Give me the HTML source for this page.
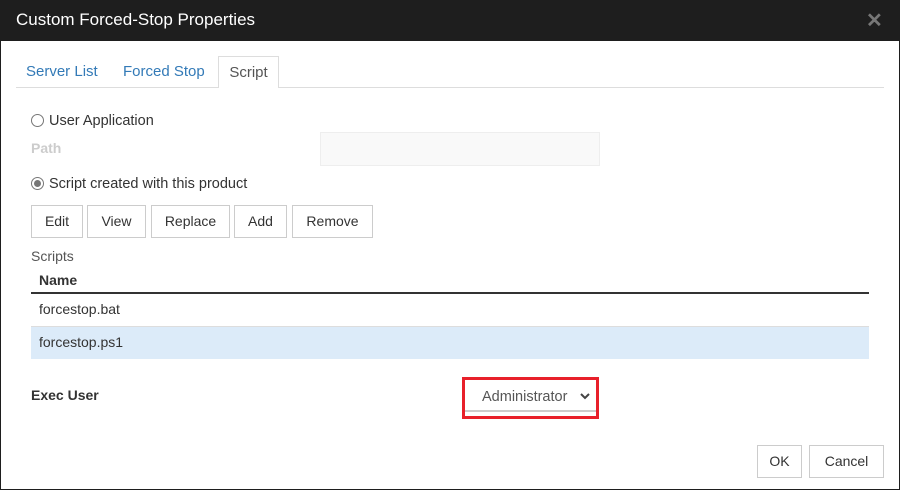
<!DOCTYPE html>
<html><head><style>
*{box-sizing:border-box;margin:0;padding:0}
body{width:900px;height:490px;background:#fff;font-family:"Liberation Sans",sans-serif;font-size:14px;color:#333;position:relative;overflow:hidden}
.a{position:absolute}
.hd{left:0;top:0;width:900px;height:41px;background:#1e1e1e;color:#fff;font-size:17px;padding:10px 16px}
.frame{left:0;top:0;width:900px;height:490px;border:1px solid #1e1e1e}
.btn{position:absolute;border:1px solid #ccc;background:#fff;height:33px;text-align:center;line-height:31px;font-size:14px;color:#333}
.rad{width:13px;height:13px;border:1px solid #777;border-radius:50%;background:#fff}
</style></head><body>
<div class="a frame"></div>
<div class="a hd">Custom Forced-Stop Properties</div>
<div class="a" style="left:866px;top:8px;color:#777;font-size:20px;font-weight:bold">✕</div>
<div class="a" style="left:16px;top:87px;width:868px;height:1px;background:#ddd"></div>
<div class="a" style="left:26px;top:63px;color:#337ab7;font-size:15px">Server List</div>
<div class="a" style="left:123px;top:63px;color:#337ab7;font-size:15px">Forced Stop</div>
<div class="a" style="left:218px;top:56px;width:61px;height:32px;border:1px solid #ddd;border-bottom:none;background:#fff;padding-top:7px;text-align:center;color:#555;font-size:15px">Script</div>
<div class="a rad" style="left:31px;top:114px"></div>
<div class="a" style="left:49px;top:113px;font-size:14.5px">User Application</div>
<div class="a" style="left:31px;top:140px;color:#ccc;font-weight:bold">Path</div>
<div class="a" style="left:320px;top:132px;width:280px;height:34px;background:#f9f9f9;border:1px solid #eee"></div>
<div class="a rad" style="left:31px;top:177px"></div>
<div class="a" style="left:34px;top:180px;width:7px;height:7px;border-radius:50%;background:#777"></div>
<div class="a" style="left:49px;top:176px;font-size:14.5px">Script created with this product</div>
<div class="btn" style="left:31px;top:205px;width:52px">Edit</div>
<div class="btn" style="left:87px;top:205px;width:59px">View</div>
<div class="btn" style="left:151px;top:205px;width:79px">Replace</div>
<div class="btn" style="left:234px;top:205px;width:53px">Add</div>
<div class="btn" style="left:292px;top:205px;width:81px">Remove</div>
<div class="a" style="left:31px;top:248px;color:#555">Scripts</div>
<div class="a" style="left:39px;top:272px;font-weight:bold">Name</div>
<div class="a" style="left:31px;top:292px;width:838px;height:2px;background:#333"></div>
<div class="a" style="left:39px;top:301px">forcestop.bat</div>
<div class="a" style="left:31px;top:326px;width:838px;height:33px;background:#dcebf9;border-top:1px solid #ddd"></div>
<div class="a" style="left:39px;top:334px">forcestop.ps1</div>
<div class="a" style="left:31px;top:387px;font-weight:bold">Exec User</div>
<div class="a" style="left:462px;top:377px;width:137px;height:42px;border:3px solid #e8202a"></div>
<div class="a" style="left:465px;top:410px;width:131px;height:2px;background:#ccc"></div>
<div class="a" style="left:482px;top:389px;color:#555;font-size:14.5px">Administrator</div>
<svg class="a" style="left:580px;top:392px" width="10" height="8"><path d="M1 2 L5 6 L9 2" stroke="#444" stroke-width="2" fill="none"/></svg>
<div class="btn" style="left:757px;top:445px;width:45px">OK</div>
<div class="btn" style="left:809px;top:445px;width:75px">Cancel</div>
</body></html>
